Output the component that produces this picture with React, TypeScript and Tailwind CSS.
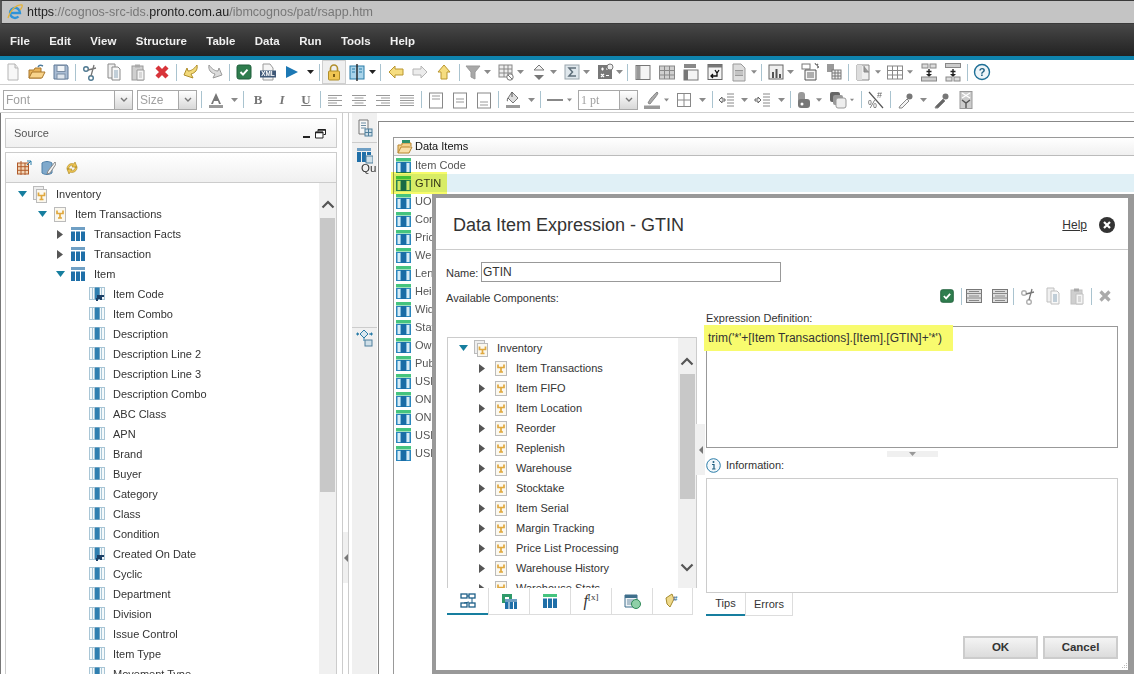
import React from "react";

const font = "[font-family:'Liberation_Sans',sans-serif]";

type SP = { children: React.ReactNode; s?: number; h?: number; vb?: string };
const Svg = ({ children, s = 20, h, vb = "0 0 20 20" }: SP) => (
  <svg width={s} height={h ?? s} viewBox={vb} className="block shrink-0">
    {children}
  </svg>
);

/* ---------- toolbar icons ---------- */
const New = () => <Svg><path d="M5 2h7l3 4v12H5z" fill="#f7f7f7" stroke="#b5b5b5" /><path d="M12 2v4h3" fill="#e6e6e6" stroke="#b5b5b5" /></Svg>;
const Open = () => <Svg><path d="M2 16V8h5l1-2h6v10z" fill="#e9b45a" stroke="#a9772a" /><path d="M2 16l3-6h13l-3 6z" fill="#f8d48c" stroke="#a9772a" /><path d="M11 5c1-2 3-2 5-1" fill="none" stroke="#4d7b9c" strokeWidth="1.4" /></Svg>;
const Save = () => <Svg><path d="M3 3h13l1 2v12H3z" fill="#a9bcd4" stroke="#5e7896" /><rect x="6" y="3.5" width="8" height="6" fill="#f2f5f8" stroke="#7b8ea5" /><rect x="6" y="12" width="8" height="5" fill="#dfe6ee" stroke="#7b8ea5" /></Svg>;
const Cut = ({ c = "#4d7891" }: { c?: string }) => <Svg><circle cx="6" cy="7" r="2.3" fill="none" stroke={c} strokeWidth="1.4" /><circle cx="11" cy="16" r="2.3" fill="none" stroke={c} strokeWidth="1.4" /><path d="M8 8l8-2M11 14l3-11" stroke="#777" strokeWidth="1.3" fill="none" /></Svg>;
const Copy = ({ c = "#8a8a8a" }: { c?: string }) => <Svg><path d="M4 2h7v14H4z" fill="#f0f0f0" stroke={c} /><path d="M8 5h6l2 2v11H8z" fill="#f8f8f8" stroke={c} /><path d="M10 9h4M10 11h4M10 13h4M10 15h4" stroke="#8ba5b8" /></Svg>;
const Paste = ({ c = "#9a9a9a" }: { c?: string }) => <Svg><rect x="4" y="4" width="11" height="14" fill="#cfcfcf" stroke={c} /><rect x="7" y="2.5" width="5" height="3" fill="#aaa" /><path d="M9 8h7v10H9z" fill="#f4f4f4" stroke={c} /><path d="M11 11h3M11 13h3M11 15h3" stroke="#bbb" /></Svg>;
const Del = () => <Svg><path d="M5 5l10 10M15 5L5 15" stroke="#d8343a" strokeWidth="4.4" /></Svg>;
const Undo = ({ f = "#f2d97a", st = "#b08e2a" }: { f?: string; st?: string }) => <Svg><path d="M16 3c1 5-2 8-6 9l2 4-9-3 3-7 1 3c3 0 6-2 9-6z" fill={f} stroke={st} /></Svg>;
const Redo = () => <div className="-scale-x-100"><Undo f="#dcdcdc" st="#9a9a9a" /></div>;
const Check = ({ s = 20 }: { s?: number }) => <Svg s={s}><rect x="3" y="3" width="14" height="14" rx="2" fill="#2f7d4e" stroke="#1f5f3a" /><path d="M6.5 10l2.5 2.6 4.5-5" fill="none" stroke="#fff" strokeWidth="2" /></Svg>;
const Xml = () => <Svg><path d="M5 2h7l3 4v12H5z" fill="#f5f5f5" stroke="#9a9a9a" /><rect x="2" y="8.5" width="16" height="7" fill="#3f5877" /><text x="10" y="14.3" textAnchor="middle" fontSize="6.4" fontWeight="700" fill="#fff" fontFamily="Liberation Sans">XML</text></Svg>;
const Run = () => <Svg><path d="M4 4l12 6-12 6z" fill="#1c78b4" /></Svg>;
const Lock = () => <Svg><path d="M6.5 9V6.5a3.5 3.5 0 017 0V9" fill="none" stroke="#b08e2a" strokeWidth="1.6" /><rect x="4.5" y="9" width="11" height="9" rx="1" fill="#f0c552" stroke="#b08e2a" /><rect x="9" y="12" width="2" height="3" fill="#7a5c14" /></Svg>;
const Layout = () => <Svg><rect x="3" y="4" width="14" height="13" fill="#a9d4ea" stroke="#2a7ca8" /><path d="M10 2v17" stroke="#222" strokeWidth="1.4" /><path d="M5 7h3M5 10h3M12 7h3M12 10h3" stroke="#2a7ca8" /></Svg>;
const Arr = ({ d, f = "#f6dd80", st = "#b9962f" }: { d: string; f?: string; st?: string }) => <Svg><path d={d} fill={f} stroke={st} /></Svg>;
const Filter = () => <Svg><path d="M3 4h14l-5 6v7l-4-2v-5z" fill="#a8a8a8" stroke="#9a9a9a" /></Svg>;
const TblNo = () => <Svg><rect x="3" y="3" width="13" height="12" fill="#eee" stroke="#888" /><path d="M3 7h13M3 11h13M8 3v12M12 3v12" stroke="#888" /><circle cx="14" cy="15" r="3.2" fill="#fff" stroke="#777" /><path d="M12 13l4 4" stroke="#777" /></Svg>;
const Sort = () => <Svg><path d="M10 3l5 5H5z" fill="#f2f2f2" stroke="#777" /><path d="M10 18l-5-5h10z" fill="#777" /></Svg>;
const Sum = () => <Svg><rect x="3" y="3" width="14" height="14" fill="#dfe7ec" stroke="#9aa6ad" /><path d="M14 6H7l3.5 4L7 14h7" fill="none" stroke="#5f6f7a" strokeWidth="1.5" /></Svg>;
const Calc = () => <Svg><rect x="3" y="3" width="14" height="14" fill="#777" /><path d="M6 7h3M7.5 5.5v3M11 7h3M6 12l3 3M9 12l-3 3M11 13.5h3" stroke="#fff" strokeWidth="1.2" /><circle cx="15" cy="5" r="3" fill="#eee" stroke="#777" /></Svg>;
const PanelL = () => <Svg><rect x="3" y="3.5" width="14" height="14" fill="#f4f4f4" stroke="#777" /><rect x="3.5" y="4" width="4" height="13" fill="#999" /></Svg>;
const Grid = ({ dark }: { dark?: boolean }) => <Svg><rect x="2.5" y="4" width="15" height="13" fill={dark ? "#d0d0d0" : "#fff"} stroke="#888" /><path d="M2.5 8.500h15M2.5 13h15M7.500 4v13M12.500 4v13" stroke="#888" /></Svg>;
const PanelT = () => <Svg><rect x="3" y="2" width="12" height="4" fill="#888" /><rect x="3" y="8" width="14" height="10" fill="#f4f4f4" stroke="#777" /><rect x="3" y="8" width="4" height="10" fill="#777" /></Svg>;
const PanelA = () => <Svg><rect x="3" y="2.5" width="14" height="15" fill="#f4f4f4" stroke="#666" /><rect x="3" y="2.5" width="14" height="3" fill="#777" /><path d="M6 14h6v-4M14 8l-2 3-2-3M8 12l-2 2 2 2" fill="none" stroke="#111" strokeWidth="1.3" /></Svg>;
const Doc = () => <Svg><path d="M4 2h8l4 4v13H4z" fill="#ddd" stroke="#999" /><rect x="6" y="8" width="8" height="6" fill="#999" /><path d="M6 10h8M6 12h8" stroke="#eee" /></Svg>;
const Chart = () => <Svg><rect x="3" y="3" width="14" height="14" fill="#efefef" stroke="#666" /><path d="M6 16V10h2v6zM9.500 16V7h2v9zM13 16v-4h2v4z" fill="#555" /></Svg>;
const Rep = () => <Svg><rect x="2" y="2" width="8" height="5" fill="#fff" stroke="#777" /><path d="M5 8h11v10H5z" fill="#f5f5f5" stroke="#555" /><path d="M7 11h7M7 13h7M7 15h7" stroke="#666" /><path d="M15 1l1 2 2-1-1 2 2 1-2 1" fill="none" stroke="#666" /></Svg>;
const Cross = () => <Svg><rect x="3" y="2" width="7" height="8" fill="#999" /><rect x="8" y="8" width="9" height="9" fill="#eee" stroke="#777" /><path d="M8 11h9M8 14h9M11 8v9M14 8v9" stroke="#777" /></Svg>;
const Sec = () => <Svg><path d="M4 3h12v15H4z" fill="#eee" stroke="#888" /><rect x="4" y="3" width="5" height="15" fill="#ddd" /><path d="M11 4v6h5" fill="#999" stroke="#888" /></Svg>;
const InsR = () => <Svg><rect x="3" y="2" width="6" height="4" fill="#ddd" stroke="#888" /><rect x="11" y="2" width="6" height="4" fill="#ddd" stroke="#888" /><path d="M10 7v5M7.500 9.500h5" stroke="#222" strokeWidth="1.4" /><path d="M7 12l3 3 3-3" fill="#222" /><rect x="2.500" y="15" width="15" height="4" fill="#ccc" stroke="#888" /></Svg>;
const InsS = () => <Svg><rect x="2.500" y="1.500" width="15" height="4" fill="#ccc" stroke="#888" /><path d="M10 7v5M7.500 9.500h5" stroke="#222" strokeWidth="1.4" /><path d="M7 12l3 3 3-3" fill="#222" /><rect x="3" y="15" width="6" height="4" fill="#ddd" stroke="#888" /><rect x="11" y="15" width="6" height="4" fill="#ddd" stroke="#888" /></Svg>;
const Help = () => <Svg><circle cx="10" cy="10" r="7.500" fill="#eef5f9" stroke="#1e6f96" strokeWidth="1.4" /><text x="10" y="14" textAnchor="middle" fontSize="11" fontWeight="700" fill="#1e5f80" fontFamily="Liberation Sans">?</text></Svg>;

const ColorA = () => <Svg><path d="M10 3l5 11h-2l-1-3H8l-1 3H5z" fill="#777" /><rect x="3" y="15" width="14" height="3" fill="#999" /></Svg>;
const Bold = ({ t, cn }: { t: string; cn: string }) => <span className={`text-[13px] leading-none text-[#777] [font-family:'Liberation_Serif',serif] ${cn}`}>{t}</span>;
const Align = ({ k }: { k: number }) => {
  const rows = [14, 9, 14, 9, 14];
  return <Svg>{rows.map((r, i) => { const w = k === 3 ? 14 : r; const x = k === 0 || k === 3 ? 3 : k === 1 ? 3 + (14 - w) / 2 : 17 - w; return <path key={i} d={`M${x} ${5.5 + i * 2.5}h${w}`} stroke="#999" />; })}</Svg>;
};
const VA = ({ y }: { y: number }) => <Svg><rect x="3.500" y="3" width="13" height="15" fill="#fff" stroke="#888" /><path d={`M6 ${y}h8M6 ${y + 3}h8`} stroke="#999" /></Svg>;
const Fill = () => <Svg><path d="M9 2l6 6-5 5-5-5z" fill="#ddd" stroke="#777" /><path d="M5 8c-1 2-1 3 0 3M9 2v5" stroke="#555" fill="none" /><rect x="3" y="15" width="14" height="3" fill="#999" /></Svg>;
const Line = () => <Svg><rect x="2" y="9" width="16" height="2" fill="#888" /></Svg>;
const Pen = () => <Svg><path d="M15 2c-2 2-7 6-9 11l2 1c3-4 7-8 8-11z" fill="#aaa" stroke="#888" /><rect x="2" y="15.500" width="16" height="3.500" fill="#999" /></Svg>;
const Border = () => <Svg><rect x="3.500" y="3.500" width="13" height="13" fill="#fff" stroke="#888" /><path d="M10 3.500v13M3.500 10h13" stroke="#888" /></Svg>;
const Ind = ({ r }: { r?: boolean }) => <Svg><path d="M10 4h7M10 7h7M10 10h7M10 13h7M10 16h7" stroke="#888" />{r ? <path d="M2 9h3V7l3 3-3 3v-2H2z" fill="#eee" stroke="#666" /> : <path d="M8 9H5V7l-3 3 3 3v-2h3z" fill="#eee" stroke="#666" />}</Svg>;
const Cond = () => <Svg><rect x="4" y="2" width="7" height="12" rx="3" fill="#999" /><rect x="4" y="9" width="12" height="9" rx="3" fill="#777" /><circle cx="8" cy="14" r="1.500" fill="#fff" /></Svg>;
const Layers = () => <Svg><rect x="2" y="2" width="10" height="10" rx="2" fill="#666" /><rect x="5" y="5" width="10" height="10" rx="2" fill="#999" /><rect x="8" y="8" width="10" height="10" rx="2" fill="#eee" stroke="#999" /></Svg>;
const Pct = () => <Svg><path d="M3 2l14 16" stroke="#555" strokeWidth="1.2" /><text x="2" y="18" fontSize="10" fill="#666" fontFamily="Liberation Sans">%</text><text x="11" y="8" fontSize="9" fill="#666" fontFamily="Liberation Sans">#</text></Svg>;
const Drop2 = ({ light }: { light?: boolean }) => <Svg><path d="M4 16l7-7 2 2-7 7-3 0z" fill={light ? "#f4f4f4" : "#666"} stroke="#888" /><circle cx="13.500" cy="6.500" r="3" fill="#777" /></Svg>;
const Funnel = () => <Svg><rect x="4" y="1.500" width="12" height="17" fill="#ccc" stroke="#999" /><path d="M6 3l8 5M14 3L6 8" stroke="#fff" strokeWidth="1.4" /><path d="M6 10l4 3 4-3M10 13v5" stroke="#555" strokeWidth="1.4" fill="none" /></Svg>;

const Caret = ({ c = "#8a8a8a" }: { c?: string }) => <svg width="7" height="4" viewBox="0 0 7 4" className="block"><path d="M0 0h7L3.500 4z" fill={c} /></svg>;

/* slots */
const I = ({ children, w = "w-6", cn = "" }: { children: React.ReactNode; w?: string; cn?: string }) => (
  <div className={`flex h-[24px] shrink-0 items-center justify-center ${w} ${cn}`}>{children}</div>
);
const D = ({ w, c, cn = "" }: { w: string; c?: string; cn?: string }) => (
  <div className={`flex h-[24px] shrink-0 items-center justify-center ${w} ${cn}`}><Caret c={c} /></div>
);
const S = ({ w = "w-[5px]", cn = "" }: { w?: string; cn?: string }) => (
  <div className={`flex h-[24px] shrink-0 items-center justify-center ${w} ${cn}`}><div className="h-[17px] w-px bg-[#a9c3cf]" /></div>
);
const G = ({ children, cn = "" }: { children: React.ReactNode; cn?: string }) => (
  <div className={`flex w-[33px] shrink-0 ${cn}`}>
    <I w="w-5">{children}</I>
    <D w="w-2" />
  </div>
);
const Sel = ({ t, w, b, cn = "", serif }: { t: string; w: string; b: string; cn?: string; serif?: boolean }) => (
  <div className={`flex h-[20px] shrink-0 border border-[#a8a8a8] bg-white ${w} ${cn}`}>
    <div className={`flex-1 pl-[2px] text-[12px] leading-[18px] text-[#a0a0a0] ${serif ? "[font-family:'Liberation_Serif',serif]" : ""}`}>{t}</div>
    <div className={`flex items-center justify-center border-l border-[#a8a8a8] bg-gradient-to-b from-white to-[#d8d8d8] ${b}`}>
      <svg width="8" height="5" viewBox="0 0 8 5"><path d="M1 1l3 3 3-3" fill="none" stroke="#777" strokeWidth="1.4" /></svg>
    </div>
  </div>
);

/* ---------- tree icons ---------- */
const Pkg = ({ stack }: { stack?: boolean }) => (
  <svg width="14" height="17" viewBox="0 0 14 17" className="block shrink-0">
    {stack && <rect x="0.500" y="0.500" width="10" height="13" fill="#eee" stroke="#bbb" />}
    <rect x={stack ? 3.5 : 1.5} y={stack ? 3.5 : 1.5} width={stack ? 10 : 11} height={stack ? 13 : 14} fill="#fbf8ef" stroke="#bbb" />
    <path d={stack ? "M5.500 6.500v3h6v-3M8.500 9.500v4M6.500 13.500h4" : "M4 4.500v3h6v-3M7 7.500v4.500M5 12h4"} fill="none" stroke="#e0a83e" strokeWidth="1.700" />
  </svg>
);
const Tbl = () => (
  <svg width="14" height="14" viewBox="0 0 14 14" className="block shrink-0">
    <rect width="14" height="3" fill="#6f9fc4" />
    <rect y="4.500" width="4" height="9.500" fill="#1f6fa8" /><rect x="5" y="4.500" width="4" height="9.500" fill="#1f6fa8" /><rect x="10" y="4.500" width="4" height="9.500" fill="#1f6fa8" />
  </svg>
);
const Col = ({ k }: { k?: boolean }) => (
  <svg width="16" height="14" viewBox="0 0 16 14" className="block shrink-0">
    <rect x="0.500" y="0.500" width="15" height="12" fill="#f4f9fb" stroke="#a9c6d6" />
    <path d="M3.500 0.500v12M5.500 0.500v12M10.500 0.500v12M12.500 0.500v12" stroke="#a9c6d6" />
    <rect x="6" y="0.500" width="4.500" height="12" fill="#2f7fb0" />
    {k && <path d="M8 8h7v2h-2v3h-2v-1H9v2H7v-3H8z" fill="#1c3f66" />}
  </svg>
);
const Arrow = ({ open }: { open?: boolean }) =>
  open ? (
    <svg width="9" height="6" viewBox="0 0 9 6" className="block"><path d="M0 0h9L4.500 6z" fill="#167e9f" /></svg>
  ) : (
    <svg width="6" height="9" viewBox="0 0 6 9" className="block"><path d="M0 0l6 4.500L0 9z" fill="#555" /></svg>
  );
const Chev = ({ down }: { down?: boolean }) => (
  <svg width="14" height="9" viewBox="0 0 14 9" className="block">
    <path d={down ? "M1.500 1.500L7 7l5.500-5.500" : "M1.500 7.500L7 2l5.500 5.500"} fill="none" stroke="#555" strokeWidth="2.200" />
  </svg>
);

const Row = ({ pl, children, t }: { pl: string; children: React.ReactNode; t: string }) => (
  <div className={`flex h-5 shrink-0 items-center ${pl}`}>
    {children}
    <span className="whitespace-nowrap">{t}</span>
  </div>
);

const cols = ["Item Code", "Item Combo", "Description", "Description Line 2", "Description Line 3", "Description Combo", "ABC Class", "APN", "Brand", "Buyer", "Category", "Class", "Condition", "Created On Date", "Cyclic", "Department", "Division", "Issue Control", "Item Type", "Movement Type"];
const keyed = new Set(["Item Code", "Created On Date"]);
const dataItems = ["UOI", "Con", "Pric", "Wei", "Len", "Heig", "Wid", "Stat", "Own", "Pub", "USE", "ONI", "ONI", "USE", "USE"];
const subj = ["Item Transactions", "Item FIFO", "Item Location", "Reorder", "Replenish", "Warehouse", "Stocktake", "Item Serial", "Margin Tracking", "Price List Processing", "Warehouse History", "Warehouse Stats"];

const DataIcon = () => (
  <svg width="15" height="15" viewBox="0 0 15 15" className="block shrink-0">
    <rect width="15" height="3.500" fill="#45c47e" />
    <rect y="4" width="15" height="11" fill="#2b86bd" />
    <rect x="1.500" y="5" width="3" height="9" fill="#d8ecf6" />
    <rect x="10.500" y="5" width="3" height="9" fill="#d8ecf6" />
    <rect x="5" y="4" width="5" height="11" fill="#1a6da6" />
  </svg>
);

const Stripe = () => (
  <svg width="16" height="14" viewBox="0 0 16 14"><rect x=".5" y=".5" width="15" height="13" fill="#ddd" stroke="#777" /><path d="M.5 4.500h15M.5 9h15M3 2.500h10M3 7h10M3 11.500h10" stroke="#888" /></svg>
);

export default function App() {
  return (
    <div className={`relative flex h-[674px] w-[1134px] flex-col overflow-hidden bg-white text-[#333] ${font}`}>
      {/* address bar */}
      <div className="flex h-[24px] shrink-0 items-center border-y border-[#3a3a3a] border-l-2 border-l-[#555] bg-[#c4c4c4] pl-[4px] text-[12.5px]">
        <svg width="18" height="18" viewBox="0 0 18 18" className="shrink-0">
          <path d="M4.500 10h9.500a5 5 0 10-1.500 3.500" fill="none" stroke="#2f93d8" strokeWidth="2.400" />
          <path d="M2 15C5 6 11 1 16 2c1 1-1 4-2 5" fill="none" stroke="#e4b33a" strokeWidth="1.300" />
        </svg>
        <span className="ml-[3px] whitespace-nowrap text-[#777]">
          <span className="text-[#222]">https</span>://cognos-src-ids.<span className="text-[#222]">pronto.com.au</span>/ibmcognos/pat/rsapp.htm
        </span>
      </div>
      {/* menu */}
      <div className="flex h-[32px] shrink-0 items-center gap-[19.4px] bg-gradient-to-b from-[#484848] to-[#222] pl-[10px] pt-[3px] text-[11.5px] font-bold text-[#f0f0f0]">
        {["File", "Edit", "View", "Structure", "Table", "Data", "Run", "Tools", "Help"].map((m) => <span key={m}>{m}</span>)}
      </div>
      <div className="h-[4px] shrink-0 bg-[#0f84ae]" />
      {/* toolbar 1 */}
      <div className="flex h-[25px] shrink-0 items-center border-b border-[#cfcfcf] pl-px">
        <I><New /></I><I><Open /></I><I><Save /></I><S />
        <I><Cut /></I><I><Copy /></I><I><Paste /></I><I><Del /></I><S />
        <I><Undo /></I><I><Redo /></I><S />
        <I><Check /></I><I><Xml /></I><I><Run /></I><D w="w-3" c="#222" /><S w="w-[6px]" />
        <div className="flex h-[24px] w-6 shrink-0 items-center justify-center border border-[#cfcfcf] bg-[#efefef]"><Lock /></div>
        <I w="w-[22px]"><Layout /></I><D w="w-[9px]" c="#222" /><S w="w-[7px]" />
        <I><Arr d="M3 10l6-6v3h8v6H9v3z" /></I><I><Arr d="M17 10l-6-6v3H3v6h8v3z" f="#ececec" st="#b5b5b5" /></I><I><Arr d="M10 3l6 7h-3v7H7v-7H4z" /></I><S w="w-[7px]" />
        <G><Filter /></G><G><TblNo /></G><G><Sort /></G><G><Sum /></G>
        <div className="flex w-[28px] shrink-0"><I w="w-5"><Calc /></I><D w="w-2" /></div><S w="w-[8px]" />
        <I><PanelL /></I><I><Grid dark /></I><I><PanelT /></I><I><PanelA /></I><I><Doc /></I><D w="w-[6px]" /><S w="w-[9px]" />
        <I w="w-5"><Chart /></I><D w="w-2" />
        <I cn="ml-[4px]"><Rep /></I><I><Cross /></I><S />
        <I><Sec /></I><D w="w-[6px]" />
        <I cn="ml-[2px]"><Grid /></I><D w="w-[6px]" />
        <I cn="ml-[4px]"><InsR /></I><I><InsS /></I><S />
        <I><Help /></I>
      </div>
      {/* toolbar 2 */}
      <div className="flex h-[28px] shrink-0 items-center border-b border-[#cfcfcf] pl-[3px] pt-[2px]">
        <Sel t="Font" w="w-[130px]" b="w-[18px]" />
        <Sel t="Size" w="w-[60px]" b="w-[18px]" cn="ml-[4px]" /><S w="w-[8px]" />
        <I w="w-[22px]"><ColorA /></I><D w="w-[14px]" /><S />
        <I><Bold t="B" cn="font-bold" /></I><I><Bold t="I" cn="font-bold italic" /></I><I><Bold t="U" cn="font-bold underline" /></I><S />
        <I><Align k={0} /></I><I><Align k={1} /></I><I><Align k={2} /></I><I><Align k={3} /></I><S />
        <I><VA y={6} /></I><I><VA y={9} /></I><I><VA y={12} /></I><S />
        <I><Fill /></I><D w="w-[13px]" /><S />
        <I><Line /></I><D w="w-[5px]" />
        <Sel t="1 pt" w="w-[60px]" b="w-[18px]" cn="ml-[6px]" serif />
        <I cn="ml-[2px]"><Pen /></I><D w="w-[5px]" />
        <I cn="ml-[3px]"><Border /></I><D w="w-[13px]" /><S w="w-[6px]" />
        <I><Ind /></I><D w="w-[10px]" />
        <I cn="ml-[2px]"><Ind r /></I><D w="w-[13px]" /><S w="w-[4px]" />
        <I><Cond /></I><D w="w-[6px]" />
        <I cn="ml-[4px]"><Layers /></I><D w="w-[4px]" /><S w="w-[6px]" cn="ml-[4px]" />
        <I><Pct /></I><S />
        <I cn="ml-px"><Drop2 light /></I><D w="w-[10px]" />
        <I cn="ml-[2px]"><Drop2 /></I>
        <I><Funnel /></I>
      </div>

      {/* body */}
      <div className="flex min-h-0 flex-1 border-l border-[#777]">
        {/* source panel */}
        <div className="flex w-[336px] shrink-0 flex-col pl-[4px] pt-[5px]">
          <div className="flex h-[30px] shrink-0 items-center justify-between border border-[#ccc] bg-gradient-to-b from-white to-[#f0f0f0] pl-[8px] pr-[10px] pt-px text-[11px] text-[#555]">
            <span>Source</span>
            <div className="flex items-center gap-[5px]">
              <div className="mt-[7px] h-[2px] w-[7px] bg-[#222]" />
              <svg width="11" height="10" viewBox="0 0 11 10"><path d="M3 2.500V.5h7.500v5H8.500M.5 3h7.500v6H.5z" fill="#fff" stroke="#222" /><path d="M.5 3.500h7.500M3 1h7.500" stroke="#222" strokeWidth="1.500" /></svg>
            </div>
          </div>
          <div className="mt-[4px] flex min-h-0 flex-1 flex-col border-x border-t border-[#ccc]">
            <div className="flex h-[30px] shrink-0 items-center gap-[8px] border-b border-[#ccc] bg-gradient-to-b from-white to-[#f0f0f0] pl-[10px]">
              <svg width="16" height="16" viewBox="0 0 16 16"><rect x="1.500" y="3" width="11" height="11" fill="#f2d6b8" stroke="#b05a2a" /><path d="M1.500 6.700h11M1.500 10.300h11M5 1v14M9 3v12" stroke="#b05a2a" /><path d="M11 1l4 0v4M15 1l-4 4" fill="none" stroke="#2a7ca8" /></svg>
              <svg width="16" height="16" viewBox="0 0 16 16"><path d="M2 3c3-2 7-2 10 0v10c-3 2-7 2-10 0z" fill="#7fa9cc" stroke="#4f80a8" /><path d="M15 2L8 11l-1 3 3-1 6-9z" fill="#f4f4f4" stroke="#888" /></svg>
              <svg width="16" height="16" viewBox="0 0 16 16"><path d="M3 9a5 5 0 017-5l1-2 2 5-5 0 1-1.500a3 3 0 00-4 3.500zM13 7a5 5 0 01-7 5l-1 2-2-5 5 0-1 1.500a3 3 0 004-3.500z" fill="#f0c552" stroke="#b08e2a" strokeWidth="0.700" /></svg>
            </div>
            <div className="relative min-h-0 flex-1 overflow-hidden pt-px text-[11px]">
              <Row pl="pl-[12px]" t="Inventory"><span className="w-[15px]"><Arrow open /></span><Pkg stack /><span className="w-[9px]" /></Row>
              <Row pl="pl-[32px]" t="Item Transactions"><span className="w-[15px]"><Arrow open /></span><span className="w-[22px]"><Pkg /></span></Row>
              <Row pl="pl-[51px]" t="Transaction Facts"><span className="w-[14px]"><Arrow /></span><span className="w-[23px]"><Tbl /></span></Row>
              <Row pl="pl-[51px]" t="Transaction"><span className="w-[14px]"><Arrow /></span><span className="w-[23px]"><Tbl /></span></Row>
              <Row pl="pl-[50px]" t="Item"><span className="w-[15px]"><Arrow open /></span><span className="w-[23px]"><Tbl /></span></Row>
              {cols.map((c) => (
                <Row key={c} pl="pl-[83px]" t={c}><span className="w-[24px]"><Col k={keyed.has(c)} /></span></Row>
              ))}
              {/* scrollbar */}
              <div className="absolute bottom-0 right-0 top-0 flex w-[17px] flex-col items-center bg-[#f0f0f0] pt-[17px]">
                <Chev />
                <div className="mt-[9px] h-[274px] w-[15px] bg-[#c8c8c8]" />
              </div>
            </div>
          </div>
        </div>
        {/* splitter */}
        <div className="relative ml-[5px] w-[6px] shrink-0 border-l border-[#ccc]">
          <div className="absolute left-0 top-[419px] flex h-[51px] w-[5px] items-center justify-center bg-[#f0f0f0]">
            <svg width="4" height="8" viewBox="0 0 4 8"><path d="M4 0v8L0 4z" fill="#777" /></svg>
          </div>
        </div>
        <div className="w-[4px] shrink-0 border-l border-[#ccc]" />
        {/* left rail */}
        <div className="flex w-[25px] shrink-0 flex-col items-center bg-[#f0f0f0] pt-[6px] text-[11.5px]">
          <svg width="16" height="18" viewBox="0 0 16 18"><path d="M2 1h9v14H2z" fill="#f7f7f7" stroke="#777" /><path d="M4 4h5M4 6.500h5M4 9h5" stroke="#6d8da3" /><rect x="8" y="10" width="7" height="7" fill="#cfdfe8" stroke="#4f7f9c" /><path d="M11.500 10v7M8 13.500h7" stroke="#4f7f9c" /></svg>
          <div className="mt-[5px] h-px w-full bg-[#ccc]" />
          <div className="mt-[5px]"><svg width="16" height="16" viewBox="0 0 16 16"><rect width="14" height="3" fill="#6f9fc4" /><path d="M0 4h4v10H0zM5 4h4v10H5zM10 4h4v3h-4z" fill="#1f6fa8" /><rect x="9" y="8" width="7" height="7" fill="#cfdfe8" stroke="#4f7f9c" /></svg></div>
          <span className="-mt-[3px] self-start pl-[9px] leading-[14px] text-[#333]">Qu</span>
          <div className="mt-[152px] h-px w-full bg-[#ccc]" />
          <div className="mt-px"><svg width="18" height="18" viewBox="0 0 18 18"><path d="M8 1l4 4-4 4-4-4z" fill="#d8e6ee" stroke="#2a7ca8" /><path d="M0 5h3M13 5h4M8 9v3" stroke="#2a7ca8" /><path d="M1 3v4l2-2zM16 3v4l-2-2z" fill="#2a7ca8" /><rect x="9" y="11" width="7" height="6" fill="#cfdfe8" stroke="#4f7f9c" /></svg></div>
        </div>
        {/* main */}
        <div className="ml-px mt-[8px] flex min-w-0 flex-1 flex-col border-l border-t border-[#888]">
          <div className="ml-[14px] mt-[15px] flex-1 border-l border-t border-[#999]">
            <div className="flex h-[18px] items-center gap-[2px] border-b border-[#bbb] bg-gradient-to-b from-white to-[#f0f0f0] pl-[3px] text-[11px] text-[#111]">
              <svg width="16" height="14" viewBox="0 0 16 14"><path d="M1 13V5h4V3h9v3" fill="#f2d08c" stroke="#b9862f" /><path d="M1 13l3-6h11l-3 6z" fill="#f8dfa8" stroke="#b9862f" /><rect x="5" y="0" width="8" height="3" fill="#2b8f6a" /></svg>
              Data Items
            </div>
            <div className="text-[11px]">
              <div className="flex h-[18px] items-center gap-[4px] pl-[2px] pt-px text-[#555]"><DataIcon />Item Code</div>
              <div className="flex h-[18px] items-center gap-[4px] bg-[#e0f0f6] pl-[2px] pt-px"><DataIcon />GTIN</div>
              {dataItems.map((d, i) => (
                <div key={i} className="flex h-[18px] items-center gap-[4px] pl-[2px] pt-px text-[#555]"><DataIcon />{d}</div>
              ))}
            </div>
          </div>
        </div>
      </div>

      {/* yellow highlight */}
      <div className="absolute left-[391px] top-[172px] h-[22px] w-[56px] bg-[#f6fb6a] mix-blend-multiply" />

      {/* dialog */}
      <div className="absolute left-[432px] top-[194px] flex h-[480px] w-[702px] flex-col border-[4px] border-r-[6px] border-[#999] bg-white text-[11px]">
        <div className="flex h-[52px] shrink-0 items-center justify-between border-b border-[#ccc] pl-[17px] pr-[13px] pt-[3px]">
          <span className="text-[18px] text-[#333]">Data Item Expression - GTIN</span>
          <div className="flex items-center gap-[12px]">
            <span className="text-[12px] underline">Help</span>
            <svg width="16" height="16" viewBox="0 0 16 16"><circle cx="8" cy="8" r="8" fill="#333" /><path d="M5 5l6 6M11 5l-6 6" stroke="#fff" strokeWidth="2.200" /></svg>
          </div>
        </div>
        <div className="relative flex-1">
          <div className="flex items-center pl-[10px] pt-[12px]">
            <span className="w-[35px] pt-[3px]">Name:</span>
            <div className="flex h-[20px] w-[300px] items-center border border-[#999] pl-px text-[12px] text-[#333]">GTIN</div>
          </div>
          <div className="flex h-[32px] items-center pl-[10px] pr-[11px]">
            <span>Available Components:</span>
            <div className="mb-[4px] ml-auto flex items-center">
              <I w="w-5"><Check s={18} /></I>
              <S w="w-[4px]" cn="ml-[2px]" />
              <I w="w-[22px]"><Stripe /></I>
              <I w="w-[22px]" cn="ml-[4px]"><Stripe /></I>
              <S w="w-[4px]" />
              <I w="w-[26px]"><Cut c="#b0b0b0" /></I>
              <I w="w-[24px]"><Copy c="#c0c0c0" /></I>
              <I w="w-[24px]"><Paste c="#c0c0c0" /></I>
              <S w="w-[4px]" />
              <I w="w-[24px]"><svg width="12" height="12" viewBox="0 0 12 12"><path d="M1.500 1.500l9 9M10.500 1.500l-9 9" stroke="#aaa" strokeWidth="3.200" /></svg></I>
            </div>
          </div>
          <div className="-mt-[4px] flex">
            {/* available */}
            <div className="ml-[11px] mt-[27px] flex w-[250px] shrink-0 flex-col">
              <div className="relative h-[251px] overflow-hidden border-x border-t border-[#ccc]">
                <Row pl="pl-[11px]" t="Inventory"><span className="w-[15px]"><Arrow open /></span><Pkg stack /><span className="w-[9px]" /></Row>
                {subj.map((s) => (
                  <Row key={s} pl="pl-[31px]" t={s}><span className="w-[15px]"><Arrow /></span><span className="w-[22px]"><Pkg /></span></Row>
                ))}
                <div className="absolute bottom-0 right-0 top-0 flex w-[18px] flex-col items-center bg-[#f0f0f0] pt-[19px]">
                  <Chev />
                  <div className="mt-[8px] h-[125px] w-[15px] bg-[#c8c8c8]" />
                  <div className="mt-[64px]"><Chev down /></div>
                </div>
              </div>
              <div className="flex h-[27px] w-[246px]">
                <div className="flex w-[41px] items-center justify-center border-b-2 border-[#167e9f]">
                  <svg width="16" height="15" viewBox="0 0 16 15"><rect x="1" y="1" width="6" height="4" fill="none" stroke="#1c5f88" strokeWidth="1.300" /><rect x="9" y="1" width="6" height="4" fill="none" stroke="#1c5f88" strokeWidth="1.300" /><rect x="1" y="10" width="6" height="4" fill="none" stroke="#1c5f88" strokeWidth="1.300" /><rect x="9" y="10" width="6" height="4" fill="none" stroke="#1c5f88" strokeWidth="1.300" /><path d="M7 3h2M12 5v5M9 9L4 10" stroke="#1c5f88" /></svg>
                </div>
                {[
                  <svg key="a" width="16" height="15" viewBox="0 0 16 15"><rect x="1" y="0" width="10" height="3" fill="#2f9a6a" /><path d="M1 3h3v6H1zM8 3h3v2H8z" fill="#2f9a6a" /><rect x="4" y="5" width="12" height="3" fill="#6f9fc4" /><path d="M4 8h3.500v7H4zM8.500 8H12v7H8.500zM13 8h3v7h-3z" fill="#1f6fa8" /></svg>,
                  <svg key="b" width="14" height="14" viewBox="0 0 14 14"><rect width="14" height="3" fill="#45c47e" /><path d="M0 4.500h4V14H0zM5 4.500h4V14H5zM10 4.500h4V14h-4z" fill="#1f6fa8" /></svg>,
                  <span key="c" className="text-[16px] italic leading-none text-[#333] [font-family:'Liberation_Serif',serif]">f<span className="align-top text-[9px] not-italic">[x]</span></span>,
                  <svg key="d" width="17" height="15" viewBox="0 0 17 15"><path d="M1 1h12v12H1z" fill="#eef3f6" stroke="#3f6f8c" /><rect x="1" y="1" width="12" height="3" fill="#3f6f8c" /><path d="M3 6h7M3 8h7M3 10h5" stroke="#6d8da3" /><circle cx="12" cy="10" r="4.500" fill="#8fd0a8" stroke="#2f8a58" /></svg>,
                  <svg key="e" width="17" height="16" viewBox="0 0 17 16"><path d="M2 5l6-4 2 5-4 8-3-3z" fill="#efd98a" stroke="#a58b2f" /><text x="9" y="8" fontSize="8" fontWeight="700" fill="#3f6f8c" fontFamily="Liberation Sans">#</text></svg>,
                ].map((ic, i) => (
                  <div key={i} className="flex w-[41px] items-center justify-center border-b border-l border-[#ddd] last:border-r">{ic}</div>
                ))}
              </div>
            </div>
            {/* right */}
            <div className="ml-[9px] w-[412px] shrink-0">
              <div className="h-[16px] leading-[16px]">Expression Definition:</div>
              <div className="relative h-[122px] border border-[#999] bg-white">
                <div className="absolute -left-[3px] -top-[2px] flex h-[26px] w-[249px] items-center whitespace-nowrap bg-[#f8fb6e] pl-[4px] text-[12px] text-[#333]">trim(&apos;*&apos;+[Item Transactions].[Item].[GTIN]+&apos;*&apos;)</div>
              </div>
              <div className="relative h-[30px]">
                <div className="absolute left-[181px] top-[3px] flex h-[6px] w-[51px] items-center justify-center bg-[#f0f0f0]"><Caret c="#999" /></div>
                <div className="flex items-center gap-[5px] pt-[9px]">
                  <svg width="15" height="15" viewBox="0 0 15 15"><circle cx="7.500" cy="7.500" r="6.800" fill="#f2f8fb" stroke="#2a7ca8" /><path d="M6 6.500h2V11M6 11h3.500" fill="none" stroke="#1e5f80" strokeWidth="1.200" /><circle cx="7.500" cy="4" r="1" fill="#1e5f80" /></svg>
                  <span>Information:</span>
                </div>
              </div>
              <div className="h-[115px] border border-[#ccc]" />
              <div className="flex h-[23px]">
                <div className="flex w-[39px] items-center justify-center border-b-2 border-[#167e9f]">Tips</div>
                <div className="flex w-[48px] items-center justify-center border border-t-0 border-[#ddd]">Errors</div>
              </div>
            </div>
          </div>
          {/* collapse */}
          <div className="absolute left-[260px] top-[174px] flex h-[51px] w-[9px] items-center justify-center bg-[#f0f0f0]">
            <svg width="4" height="8" viewBox="0 0 4 8"><path d="M4 0v8L0 4z" fill="#777" /></svg>
          </div>
          {/* buttons */}
          <div className="absolute bottom-[11px] right-[10px] flex gap-[5px] text-[11.5px] font-bold">
            <div className="flex h-[23px] w-[75px] items-center justify-center border-2 border-[#ccc] bg-gradient-to-b from-[#f4f4f4] to-[#dcdcdc] text-[#333]">OK</div>
            <div className="flex h-[23px] w-[75px] items-center justify-center border-2 border-[#ccc] bg-gradient-to-b from-[#f4f4f4] to-[#dcdcdc] text-[#333]">Cancel</div>
          </div>
          <svg width="6" height="6" viewBox="0 0 6 6" className="absolute bottom-px right-[1px]"><path d="M5 0h1v1H5zM3 2h1v1H3zM5 2h1v1H5zM1 4h1v1H1zM3 4h1v1H3zM5 4h1v1H5z" fill="#bbb" /></svg>
        </div>
      </div>
    </div>
  );
}
